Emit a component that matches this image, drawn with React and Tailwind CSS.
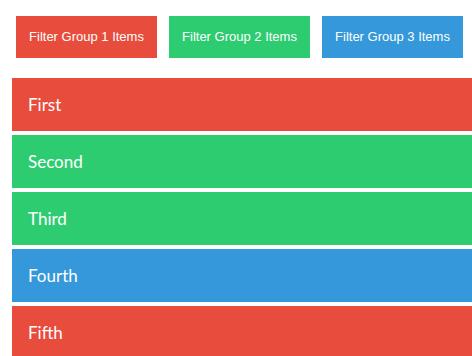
import React from "react";

const buttons = [
  { label: "Filter Group 1 Items", color: "bg-[#e74c3c]" },
  { label: "Filter Group 2 Items", color: "bg-[#2ecc71]" },
  { label: "Filter Group 3 Items", color: "bg-[#3498db]" },
];

const items = [
  { label: "First", color: "bg-[#e74c3c]" },
  { label: "Second", color: "bg-[#2ecc71]" },
  { label: "Third", color: "bg-[#2ecc71]" },
  { label: "Fourth", color: "bg-[#3498db]" },
  { label: "Fifth", color: "bg-[#e74c3c]" },
];

export default function App() {
  return (
    <div className="w-[472px] h-[356px] overflow-hidden bg-white">
      {/* Boutons de filtre */}
      <div className="flex gap-3 pl-4 pt-4">
        {buttons.map((b) => (
          <button
            key={b.label}
            className={`${b.color} w-[141px] h-[42px] text-white text-[13px] font-['Liberation_Sans',Arial,sans-serif] flex items-center justify-center`}
          >
            {b.label}
          </button>
        ))}
      </div>

      {/* Liste */}
      <div className="flex flex-col gap-1 pl-3 mt-5">
        {items.map((it) => (
          <div
            key={it.label}
            className={`${it.color} h-[53px] flex items-center pl-4 text-white text-[17px] font-['Lato',sans-serif]`}
          >
            {it.label}
          </div>
        ))}
      </div>
    </div>
  );
}
